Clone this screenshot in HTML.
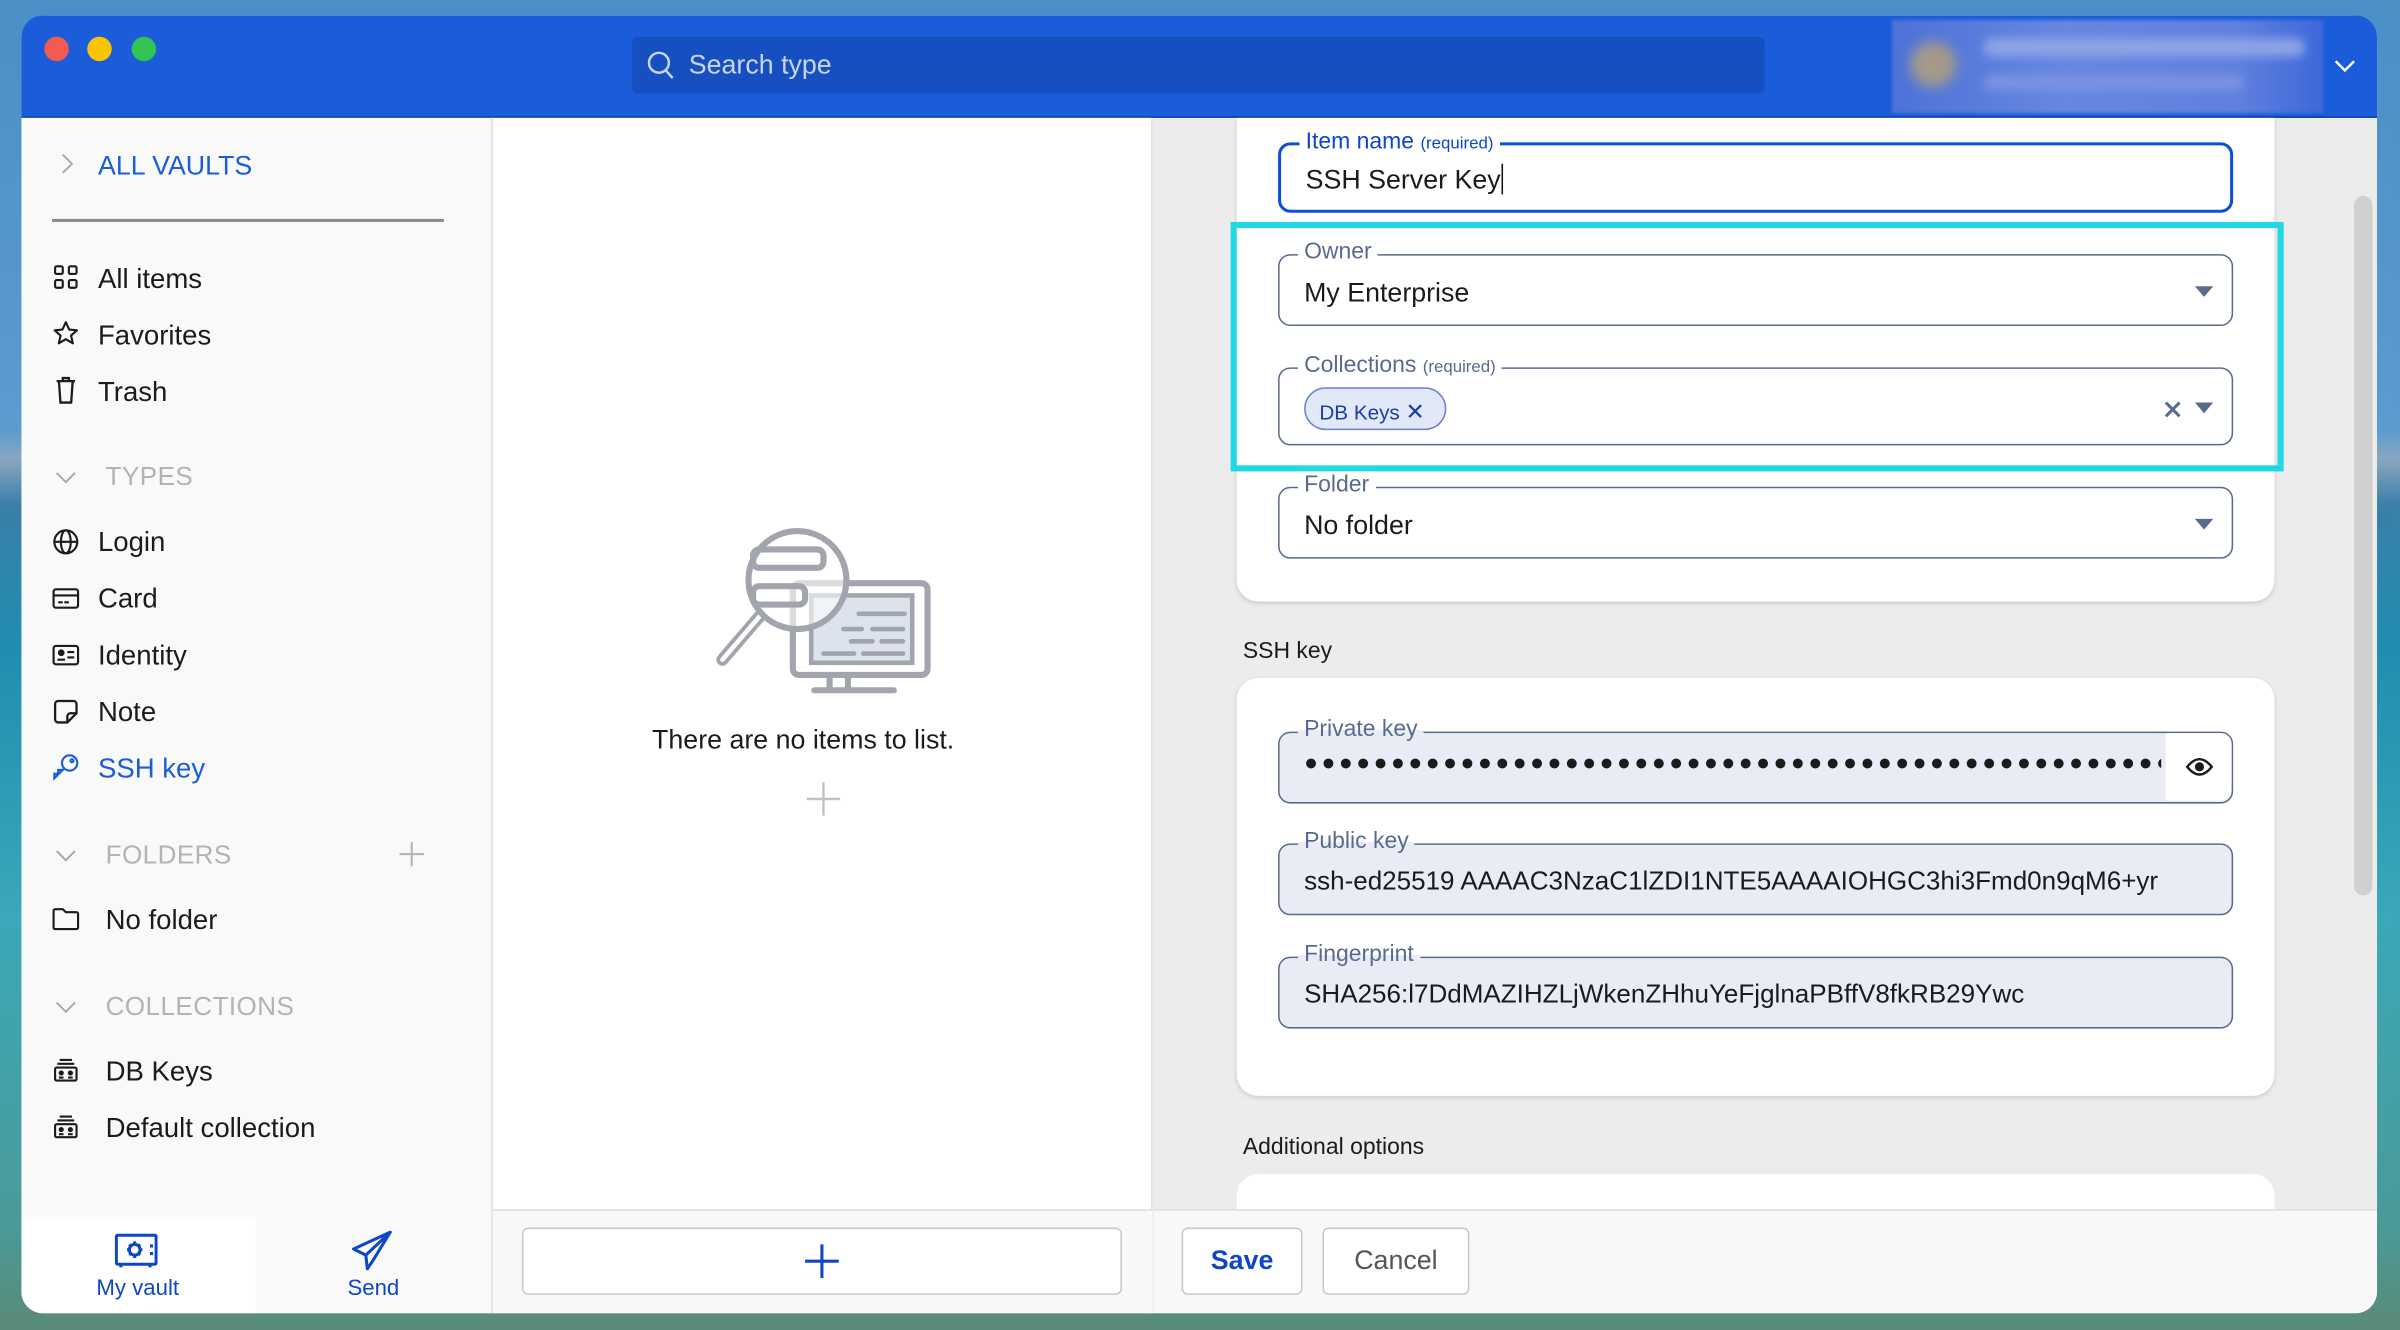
<!DOCTYPE html>
<html><head><meta charset="utf-8"><style>
*{box-sizing:border-box;margin:0;padding:0}
html,body{width:2400px;height:1330px;overflow:hidden}
body{font-family:"Liberation Sans",sans-serif;background:#4a90c6}
#s{position:absolute;left:0;top:0;width:1568px;height:869px;transform:scale(1.5306);transform-origin:0 0;
background:linear-gradient(180deg,#4b8fc7 0,#5a9bd0 280px,#8aa6c0 300px,#3a7fa8 330px,#1f8db0 420px,#3aa8b8 600px,#4a9a98 800px,#5a8a78 869px)}
.abs{position:absolute}
.win{left:14px;top:10px;width:1539px;height:848px;border-radius:14px;overflow:hidden;background:#ececec}
.hdr{left:0;top:0;width:1539px;height:67px;background:#1a5cd9;border-bottom:1px solid #0b3fb0}
.dot{width:16px;height:16px;border-radius:50%;top:14px}
.side{left:0;top:67px;width:308px;height:781px;background:#f9f9f9;border-right:1px solid #ddd}
.mid{left:308px;top:67px;width:431px;height:781px;background:#fff;border-right:1px solid #e2e2e2}
.t{position:absolute;font-size:18px;color:#1b1b1b;white-space:nowrap}
.sec{position:absolute;font-size:17px;color:#b3b3b3;letter-spacing:.3px}
.ic{position:absolute}
.fs{position:absolute;left:821px;width:624px;border:1.5px solid #5a6a8f;border-radius:8px;background:#fff}
.lg{position:absolute;left:12px;top:-11px;background:#fff;padding:0 4px;font-size:15px;color:#5a6a8f;line-height:18px}
.lg small{font-size:11px}
.val{position:absolute;left:16px;font-size:17.5px;color:#1b1b1b;white-space:nowrap}
.tri{position:absolute;right:12px;width:0;height:0;border-left:6px solid transparent;border-right:6px solid transparent;border-top:7px solid #5a6a8f}
</style></head><body><div id="s">
<div class="abs win">
 <div class="abs hdr">
  <div class="abs dot" style="left:15px;background:#f55a52"></div>
  <div class="abs dot" style="left:43px;background:#f8c500"></div>
  <div class="abs dot" style="left:72px;background:#31c452"></div>
  <div class="abs" style="left:399px;top:14px;width:740px;height:37px;background:#1650c0;border-radius:4px">
   <svg class="ic" style="left:9px;top:9px" width="20" height="20" viewBox="0 0 20 20"><circle cx="8.5" cy="8" r="6.5" fill="none" stroke="#c9d6f3" stroke-width="1.6"/><path d="M13 13l4.5 5" stroke="#c9d6f3" stroke-width="1.6"/></svg>
   <span class="t" style="left:37px;top:8px;color:#c9d6f3;font-size:17.5px">Search type</span>
  </div>
  <div class="abs" style="left:1222px;top:3px;width:282px;height:61px;background:linear-gradient(90deg,#4d72d8,#6687e0 40%,#5f80de 80%,#3e68da);filter:blur(1px)">
   <div class="abs" style="left:12px;top:14px;width:30px;height:30px;border-radius:50%;background:#a49a8a;filter:blur(4px)"></div>
   <div class="abs" style="left:60px;top:12px;width:210px;height:12px;border-radius:6px;background:#8ea3e6;filter:blur(3px)"></div>
   <div class="abs" style="left:60px;top:36px;width:170px;height:10px;border-radius:5px;background:#7b93e2;filter:blur(3px)"></div>
  </div>
  <svg class="ic" style="left:1510px;top:28px" width="16" height="10" viewBox="0 0 16 10"><path d="M2 2l6 6 6-6" fill="none" stroke="#fff" stroke-width="1.6"/></svg>
 </div>

 <div class="abs side">
  <svg class="ic" style="left:25px;top:22px" width="10" height="16" viewBox="0 0 10 16"><path d="M2 2l6 6-6 6" fill="none" stroke="#aaa" stroke-width="1.3"/></svg>
  <span class="t" style="left:50px;top:21px;color:#1a5cd9;font-size:17.5px">ALL VAULTS</span>
  <div class="abs" style="left:20px;top:66px;width:256px;height:2px;background:#8a8a8a"></div>
  <svg class="ic" style="left:21px;top:96px" width="16" height="16" viewBox="0 0 16 16" fill="none" stroke="#1b1b1b" stroke-width="1.4"><rect x="1" y="1" width="5" height="5" rx="1"/><rect x="10" y="1" width="5" height="5" rx="1"/><rect x="1" y="10" width="5" height="5" rx="1"/><rect x="10" y="10" width="5" height="5" rx="1"/></svg>
  <span class="t" style="left:50px;top:95px">All items</span>
  <svg class="ic" style="left:20px;top:132px" width="18" height="18" viewBox="0 0 18 18"><path d="M9 1.5l2.2 4.8 5.1.5-3.9 3.4 1.2 5.1L9 12.6l-4.6 2.7 1.2-5.1L1.7 6.8l5.1-.5z" fill="none" stroke="#1b1b1b" stroke-width="1.4" stroke-linejoin="round"/></svg>
  <span class="t" style="left:50px;top:132px">Favorites</span>
  <svg class="ic" style="left:22px;top:169px" width="14" height="18" viewBox="0 0 14 18" fill="none" stroke="#1b1b1b" stroke-width="1.5"><path d="M1 3h12M5 3V1h4v2M2.5 3l1 14h7l1-14"/></svg>
  <span class="t" style="left:50px;top:169px">Trash</span>

  <svg class="ic" style="left:21px;top:230px" width="16" height="10" viewBox="0 0 16 10"><path d="M2 2l6 6 6-6" fill="none" stroke="#aaa" stroke-width="1.3"/></svg>
  <span class="sec" style="left:55px;top:225px">TYPES</span>
  <svg class="ic" style="left:20px;top:268px" width="18" height="18" viewBox="0 0 18 18" fill="none" stroke="#1b1b1b" stroke-width="1.4"><circle cx="9" cy="9" r="7.5"/><ellipse cx="9" cy="9" rx="3.2" ry="7.5"/><path d="M1.5 9h15"/></svg>
  <span class="t" style="left:50px;top:267px">Login</span>
  <svg class="ic" style="left:20px;top:307px" width="18" height="14" viewBox="0 0 18 14" fill="none" stroke="#1b1b1b" stroke-width="1.4"><rect x="1" y="1" width="16" height="12" rx="1.5"/><path d="M1 5h16M4 9.5h3M8 9.5h3"/></svg>
  <span class="t" style="left:50px;top:304px">Card</span>
  <svg class="ic" style="left:20px;top:344px" width="18" height="14" viewBox="0 0 18 14" fill="none" stroke="#1b1b1b" stroke-width="1.4"><rect x="1" y="1" width="16" height="12" rx="1.5"/><circle cx="6" cy="5.5" r="1.5" fill="#1b1b1b"/><path d="M3.5 10h5M10 5h4.5M10 8.5h4.5"/></svg>
  <span class="t" style="left:50px;top:341px">Identity</span>
  <svg class="ic" style="left:21px;top:380px" width="16" height="16" viewBox="0 0 16 16" fill="none" stroke="#1b1b1b" stroke-width="1.5"><path d="M3 1h10a2 2 0 012 2v6l-6 6H3a2 2 0 01-2-2V3a2 2 0 012-2zM15 9h-4a2 2 0 00-2 2v4"/></svg>
  <span class="t" style="left:50px;top:378px">Note</span>
  <svg class="ic" style="left:20px;top:415px" width="18" height="18" viewBox="0 0 18 18" fill="none" stroke="#1a5cd9" stroke-width="1.4"><circle cx="11.5" cy="6.5" r="5"/><circle cx="13" cy="5" r="1"/><path d="M8 10l-6.5 6.5v-3h2.5v-2.5h2.5"/></svg>
  <span class="t" style="left:50px;top:415px;color:#1a5cd9">SSH key</span>

  <svg class="ic" style="left:21px;top:477px" width="16" height="10" viewBox="0 0 16 10"><path d="M2 2l6 6 6-6" fill="none" stroke="#aaa" stroke-width="1.3"/></svg>
  <span class="sec" style="left:55px;top:472px">FOLDERS</span>
  <svg class="ic" style="left:246px;top:472px" width="18" height="18" viewBox="0 0 18 18"><path d="M9 1v16M1 9h16" stroke="#b5b5b5" stroke-width="1.4"/></svg>
  <svg class="ic" style="left:20px;top:516px" width="18" height="15" viewBox="0 0 18 15" fill="none" stroke="#1b1b1b" stroke-width="1.4"><path d="M1 2a1 1 0 011-1h5l2 2h7a1 1 0 011 1v9a1 1 0 01-1 1H2a1 1 0 01-1-1z"/></svg>
  <span class="t" style="left:55px;top:514px">No folder</span>

  <svg class="ic" style="left:21px;top:576px" width="16" height="10" viewBox="0 0 16 10"><path d="M2 2l6 6 6-6" fill="none" stroke="#aaa" stroke-width="1.3"/></svg>
  <span class="sec" style="left:55px;top:571px">COLLECTIONS</span>
  <svg class="ic" style="left:21px;top:614px" width="16" height="16" viewBox="0 0 16 16" fill="none" stroke="#1b1b1b" stroke-width="1.4"><path d="M4 1.5h8M2.5 4h11"/><rect x="1" y="6.5" width="14" height="8.5" rx="1"/><circle cx="5" cy="10" r="1" fill="#1b1b1b"/><circle cx="11" cy="10" r="1" fill="#1b1b1b"/><path d="M3.5 13h3M9.5 13h3"/></svg>
  <span class="t" style="left:55px;top:613px">DB Keys</span>
  <svg class="ic" style="left:21px;top:651px" width="16" height="16" viewBox="0 0 16 16" fill="none" stroke="#1b1b1b" stroke-width="1.4"><path d="M4 1.5h8M2.5 4h11"/><rect x="1" y="6.5" width="14" height="8.5" rx="1"/><circle cx="5" cy="10" r="1" fill="#1b1b1b"/><circle cx="11" cy="10" r="1" fill="#1b1b1b"/><path d="M3.5 13h3M9.5 13h3"/></svg>
  <span class="t" style="left:55px;top:650px">Default collection</span>

  <div class="abs" style="left:0;top:718px;width:153px;height:63px;background:#fff"></div>
  <svg class="ic" style="left:61px;top:729px" width="28" height="23" viewBox="0 0 28 23" fill="none" stroke="#0d47c7" stroke-width="2"><rect x="1" y="1" width="26" height="19" rx="1"/><circle cx="13" cy="10.5" r="3.5"/><path d="M13 5v2M13 14v2M8 10.5h2M16 10.5h2M9.5 7l1.5 1.5M15 12.5l1.5 1.5M16.5 7L15 8.5M11 12.5L9.5 14M24 7v2M24 12v2M4 20v2M23 20v2"/></svg>
  <span class="t" style="left:49px;top:757px;font-size:14.5px;color:#0d47c7">My vault</span>
  <svg class="ic" style="left:215px;top:727px" width="28" height="26" viewBox="0 0 28 26" fill="none" stroke="#0d47c7" stroke-width="2" stroke-linejoin="round"><path d="M26 1L2 12l8 4zM26 1L10 16l1 9 4-6M26 1l-11 18"/></svg>
  <span class="t" style="left:213px;top:757px;font-size:14.5px;color:#0d47c7">Send</span>
 </div>

 <div class="abs mid">
  <svg class="ic" style="left:144px;top:266px" width="146" height="110" viewBox="0 0 146 110" fill="none" stroke="#a2a5ad" stroke-width="4" stroke-linecap="round">
   <rect x="52" y="38" width="88" height="60" rx="4" fill="#fff"/>
   <rect x="64" y="46" width="66" height="44" fill="#dde3ec" stroke-width="3"/>
   <path d="M95 58h30M85 68h12M104 68h20M90 76h14M110 76h14M72 84h20M98 84h26" stroke-width="3"/>
   <path d="M76 98v10M88 98v10M66 108h52"/>
   <path d="M30 60L6 88" stroke-width="8"/><path d="M30 60L6 88" stroke="#fff" stroke-width="3"/>
   <circle cx="55" cy="36" r="32" fill="#fff" fill-opacity=".6"/>
   <rect x="26" y="16" width="46" height="12" rx="4"/><rect x="26" y="40" width="34" height="12" rx="4"/>
  </svg>
  <span class="t" style="left:104px;top:396px;font-size:17.5px">There are no items to list.</span>
  <svg class="ic" style="left:205px;top:434px" width="22" height="22" viewBox="0 0 22 22"><path d="M11 0v22M0 11h22" stroke="#c2c2c2" stroke-width="1.6"/></svg>
  <div class="abs" style="left:0;top:713px;width:431px;height:68px;background:#f8f8f8;border-top:1.5px solid #ddd"></div>
  <div class="abs" style="left:19px;top:725px;width:392px;height:44px;background:#fff;border:1.5px solid #c8c8c8;border-radius:4px">
   <svg class="ic" style="left:183px;top:9px" width="24" height="24" viewBox="0 0 24 24"><path d="M12 1v22M1 12h22" stroke="#0d47c7" stroke-width="2"/></svg>
  </div>
 </div>

 <div class="abs" style="left:794px;top:67px;width:678px;height:316px;background:#fff;border-radius:0 0 14px 14px;box-shadow:0 1px 3px rgba(0,0,0,.15)"></div>
 <div class="fs" style="top:83px;height:46px;border:2px solid #0d4fd6"><div class="lg" style="color:#0d47c7">Item name <small>(required)</small></div><span class="val" style="top:12px">SSH Server Key<span style="border-left:1.5px solid #111;margin-left:1px"></span></span></div>
 <div class="abs" style="left:790px;top:135px;width:688px;height:163px;border:4px solid #22d8e6"></div>
 <div class="fs" style="top:156px;height:47px"><div class="lg">Owner</div><span class="val" style="top:14px">My Enterprise</span><div class="tri" style="top:20px"></div></div>
 <div class="fs" style="top:230px;height:51px"><div class="lg">Collections <small>(required)</small></div>
  <div class="abs" style="left:16px;top:12px;width:93px;height:28px;border:1px solid #6b82c9;background:#e1e8f8;border-radius:14px;font-size:13.5px;color:#1a3ea8;padding:6px 0 0 9px">DB Keys <span style="font-size:15px">✕</span></div>
  <svg class="ic" style="left:578px;top:21px" width="11" height="11" viewBox="0 0 11 11"><path d="M1 1l9 9M10 1l-9 9" stroke="#5a6a8f" stroke-width="2"/></svg>
  <div class="tri" style="top:22px"></div></div>
 <div class="fs" style="top:308px;height:47px"><div class="lg">Folder</div><span class="val" style="top:14px">No folder</span><div class="tri" style="top:20px"></div></div>

 <span class="t" style="left:798px;top:407px;font-size:15px">SSH key</span>
 <div class="abs" style="left:794px;top:433px;width:678px;height:273px;background:#fff;border-radius:14px;box-shadow:0 1px 3px rgba(0,0,0,.15)"></div>
 <div class="fs" style="top:468px;height:47px;background:#e9ecf4"><div class="lg" style="background:linear-gradient(#fff 50%,#e9ecf4 50%)">Private key</div>
  <span class="val" style="top:11px;font-size:15px;letter-spacing:2.3px;width:560px;overflow:hidden">●●●●●●●●●●●●●●●●●●●●●●●●●●●●●●●●●●●●●●●●●●●●●●●●●●●●●●●●●●●</span>
  <div class="abs" style="right:0;top:0;width:43px;height:44px;background:#fff;border-radius:0 7px 7px 0"></div>
  <svg class="ic" style="right:12px;top:14px" width="18" height="16" viewBox="0 0 18 16" fill="none" stroke="#1b1b1b" stroke-width="1.6"><path d="M1 8q8-10 16 0q-8 10-16 0z"/><circle cx="9" cy="8" r="2.2" fill="#1b1b1b"/></svg>
 </div>
 <div class="fs" style="top:541px;height:47px;background:#e9ecf4"><div class="lg" style="background:linear-gradient(#fff 50%,#e9ecf4 50%)">Public key</div><span class="val" style="top:14px;font-size:17px">ssh-ed25519 AAAAC3NzaC1lZDI1NTE5AAAAIOHGC3hi3Fmd0n9qM6+yr</span></div>
 <div class="fs" style="top:615px;height:47px;background:#e9ecf4"><div class="lg" style="background:linear-gradient(#fff 50%,#e9ecf4 50%)">Fingerprint</div><span class="val" style="top:14px;font-size:17px">SHA256:l7DdMAZIHZLjWkenZHhuYeFjglnaPBffV8fkRB29Ywc</span></div>

 <span class="t" style="left:798px;top:731px;font-size:15px">Additional options</span>
 <div class="abs" style="left:794px;top:757px;width:678px;height:40px;background:#fff;border-radius:14px"></div>
 <div class="abs" style="left:1524px;top:118px;width:12px;height:457px;background:#d0d0d0;border-radius:6px"></div>
 <div class="abs" style="left:740px;top:780px;width:799px;height:68px;background:#f8f8f8;border-top:1.5px solid #ddd"></div>
 <div class="abs" style="left:758px;top:792px;width:79px;height:44px;background:#fff;border:1.5px solid #c8c8c8;border-radius:4px;color:#0d47c7;font-size:17.5px;text-align:center;line-height:41px;font-weight:bold">Save</div>
 <div class="abs" style="left:850px;top:792px;width:96px;height:44px;background:#fff;border:1.5px solid #c8c8c8;border-radius:4px;color:#555;font-size:17.5px;text-align:center;line-height:41px">Cancel</div>
</div>
</div></body></html>
